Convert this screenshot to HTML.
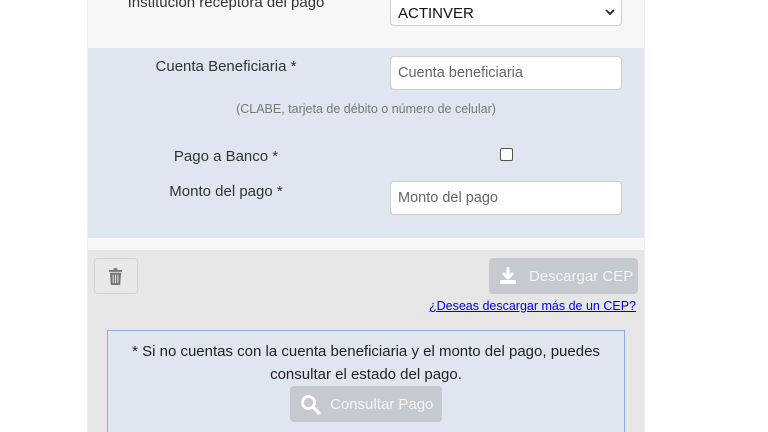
<!DOCTYPE html>
<html><head><meta charset="utf-8"><style>
*{box-sizing:border-box;margin:0;padding:0}
html,body{width:768px;height:432px;overflow:hidden}
body{background:#fff;font-family:"Liberation Sans",sans-serif;color:#333;position:relative}
.abs{position:absolute}
.panel{left:87px;top:0;width:558px;height:432px;background:#f7f7f7;border-left:1px solid #eee;border-right:1px solid #eee}
.blue{left:88px;top:48px;width:556px;height:190px;background:#e0e6f0}
.gray{left:88px;top:250px;width:556px;height:182px;background:#e6e6e6}
.inp{background:#fff;border:1px solid #ccc;border-radius:4px;font-size:14.5px;color:#666;padding-left:7px;display:flex;align-items:center}
.lbl{font-size:15px;color:#333;text-align:center}
</style></head><body>
<div class="abs panel"></div>
<div class="abs blue"></div>
<div class="abs gray"></div>
<div class="abs lbl" style="left:100px;top:-6px;width:252px">Institución receptora del pago</div>
<div class="abs inp" style="left:390px;top:-6px;width:232px;height:32px;color:#111;font-size:15px;padding-top:6px">ACTINVER
<svg class="abs" style="right:6px;top:14px" width="10" height="7" viewBox="0 0 10 7"><path d="M1 1l4 4 4-4" fill="none" stroke="#222" stroke-width="1.8"/></svg></div>
<div class="abs lbl" style="left:100px;top:58px;width:252px">Cuenta Beneficiaria *</div>
<div class="abs inp" style="left:390px;top:56px;width:232px;height:34px">Cuenta beneficiaria</div>
<div class="abs" style="left:88px;top:102px;width:556px;text-align:center;font-size:12.5px;color:#777">(CLABE, tarjeta de débito o número de celular)</div>
<div class="abs lbl" style="left:100px;top:148px;width:252px">Pago a Banco *</div>
<div class="abs" style="left:500px;top:148px;width:13px;height:13px;border:1px solid #555;border-radius:2px;background:#fff"></div>
<div class="abs lbl" style="left:100px;top:183px;width:252px">Monto del pago *</div>
<div class="abs inp" style="left:390px;top:181px;width:232px;height:34px">Monto del pago</div>
<div class="abs" style="left:94px;top:258px;width:44px;height:36px;border:1px solid #d4d4d4;border-radius:4px;background:#e8e8e8"></div>
<svg class="abs" style="left:108px;top:268px" width="15" height="18" viewBox="0 0 16 19"><rect x="1" y="2" width="14" height="2" fill="#777"/><rect x="6" y="0" width="4" height="2" fill="#777"/><path d="M2 5h12l-1 13H3z" fill="#777"/><path d="M5.5 7v9M8 7v9M10.5 7v9" stroke="#e8e8e8" stroke-width="1"/></svg>
<div class="abs" style="left:489px;top:258px;width:149px;height:36px;background:#c5cad0;border-radius:4px;color:#f4f4f4;font-size:15px;display:flex;align-items:center;padding-left:40px">Descargar CEP</div>
<svg class="abs" style="left:498px;top:266px" width="20" height="19" viewBox="0 0 20 19"><path d="M10 1v11M5 7l5 5 5-5" fill="none" stroke="#fff" stroke-width="3"/><rect x="2" y="14" width="16" height="4" fill="#fff"/></svg>
<div class="abs" style="right:132px;top:299px;font-size:12.5px;color:#0000ee;text-decoration:underline">¿Deseas descargar más de un CEP?</div>
<div class="abs" style="left:107px;top:330px;width:518px;height:110px;border:1px solid #8ab0e0;background:#e0e6f0"></div>
<div class="abs" style="left:107px;top:340px;width:518px;text-align:center;font-size:15px;line-height:23px;color:#222">* Si no cuentas con la cuenta beneficiaria y el monto del pago, puedes<br>consultar el estado del pago.</div>
<div class="abs" style="left:290px;top:386px;width:152px;height:36px;background:#c5cad0;border-radius:4px;color:#f4f4f4;font-size:15px;display:flex;align-items:center;padding-left:40px">Consultar Pago</div>
<svg class="abs" style="left:300px;top:394px" width="22" height="22" viewBox="0 0 22 22"><circle cx="8.5" cy="8.5" r="6" fill="none" stroke="#fff" stroke-width="2.8"/><path d="M13 13l6 6" stroke="#fff" stroke-width="3.2" stroke-linecap="round"/></svg>
</body></html>
